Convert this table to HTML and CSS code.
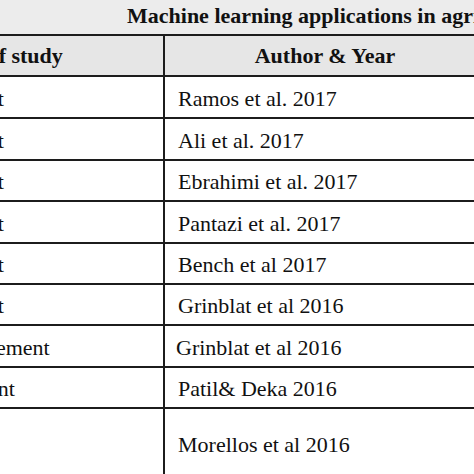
FILE: index.html
```html
<!DOCTYPE html>
<html>
<head>
<meta charset="utf-8">
<link rel="stylesheet" href="styles.css">
</head>
<body>
<div class="frame">
  <div class="table">
    <div class="cell title">Machine learning applications in agriculture</div>
    <div class="cell head center">Area of study</div>
    <div class="cell head center">Author &amp; Year</div>

    <div class="cell r40 left">Crop management</div>
    <div class="cell r40 right">Ramos et al. 2017</div>

    <div class="cell r40 left">Crop management</div>
    <div class="cell r40 right">Ali et al. 2017</div>

    <div class="cell r39 left">Crop management</div>
    <div class="cell r39 right">Ebrahimi et al. 2017</div>

    <div class="cell r40 left">Crop management</div>
    <div class="cell r40 right">Pantazi et al. 2017</div>

    <div class="cell r39 left">Crop management</div>
    <div class="cell r39 right">Bench et al 2017</div>

    <div class="cell r39 left">Crop management</div>
    <div class="cell r39 right">Grinblat et al 2016</div>

    <div class="cell r40 left wide">Livestock management</div>
    <div class="cell r40 right shifted">Grinblat et al 2016</div>

    <div class="cell r39 left wide">Water management</div>
    <div class="cell r39 right">Patil&amp; Deka 2016</div>

    <div class="cell last left">Soil management</div>
    <div class="cell last right">Morellos et al 2016</div>
  </div>
</div>
</body>
</html>
```

FILE: styles.css
```css
html, body {
  margin: 0;
  padding: 0;
  background: #ffffff;
}

.frame {
  width: 474px;
  height: 474px;
  overflow: hidden;
}

.table {
  display: grid;
  grid-template-columns: 327px 320px;
  grid-template-rows: 34px 39px 40px 40px 39px 40px 39px 39px 40px 39px 68px;
  gap: 2px;
  background: #1c1c1c;
  margin-left: -164px;
  width: 649px;
  font-family: "Liberation Serif", "Times New Roman", serif;
  font-size: 22px;
  color: #111111;
}

.cell {
  background: #ffffff;
  display: flex;
  align-items: center;
  white-space: nowrap;
  overflow: hidden;
}

.title {
  grid-column: 1 / 3;
  background: #ececec;
  font-weight: bold;
  padding-left: 291px;
  padding-bottom: 2px;
}

.head {
  background: #e6e6e6;
  font-weight: bold;
}

.center {
  justify-content: center;
}

.left {
  padding-left: 6px;
  padding-top: 3px;
}

.left.wide {
  padding-left: 9px;
}

.right {
  padding-left: 13px;
  padding-top: 3px;
}

.right.shifted {
  padding-left: 11px;
}
```
